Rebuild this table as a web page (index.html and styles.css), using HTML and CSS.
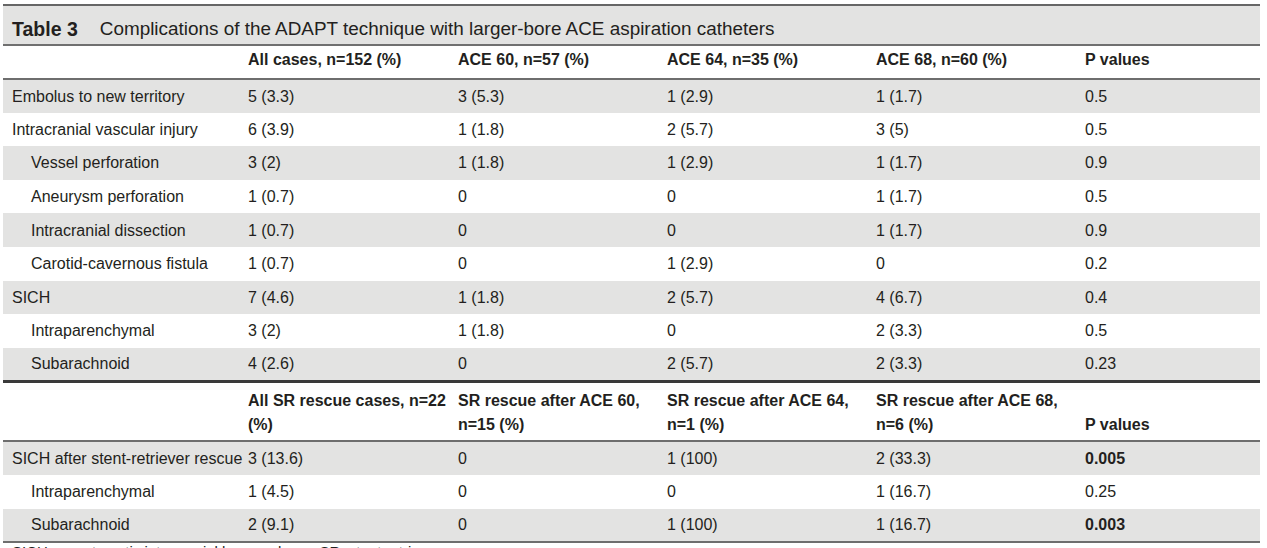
FILE: index.html
```html
<!DOCTYPE html>
<html>
<head>
<meta charset="utf-8">
<link rel="stylesheet" href="styles.css">
</head>
<body>
<div class="wrap">
  <div class="title"><span class="tnum">Table 3</span><span class="ttext">Complications of the ADAPT technique with larger-bore ACE aspiration catheters</span></div>
  <table class="tbl">
    <colgroup>
      <col class="c1"><col class="c2"><col class="c3"><col class="c4"><col class="c5"><col class="c6">
    </colgroup>
    <thead>
      <tr class="hdr">
        <th></th><th>All cases, n=152 (%)</th><th>ACE 60, n=57 (%)</th><th>ACE 64, n=35 (%)</th><th>ACE 68, n=60 (%)</th><th>P values</th>
      </tr>
    </thead>
    <tbody class="sec1">
      <tr class="g"><td>Embolus to new territory</td><td>5 (3.3)</td><td>3 (5.3)</td><td>1 (2.9)</td><td>1 (1.7)</td><td>0.5</td></tr>
      <tr><td>Intracranial vascular injury</td><td>6 (3.9)</td><td>1 (1.8)</td><td>2 (5.7)</td><td>3 (5)</td><td>0.5</td></tr>
      <tr class="g"><td class="ind">Vessel perforation</td><td>3 (2)</td><td>1 (1.8)</td><td>1 (2.9)</td><td>1 (1.7)</td><td>0.9</td></tr>
      <tr><td class="ind">Aneurysm perforation</td><td>1 (0.7)</td><td>0</td><td>0</td><td>1 (1.7)</td><td>0.5</td></tr>
      <tr class="g"><td class="ind">Intracranial dissection</td><td>1 (0.7)</td><td>0</td><td>0</td><td>1 (1.7)</td><td>0.9</td></tr>
      <tr><td class="ind">Carotid-cavernous fistula</td><td>1 (0.7)</td><td>0</td><td>1 (2.9)</td><td>0</td><td>0.2</td></tr>
      <tr class="g"><td>SICH</td><td>7 (4.6)</td><td>1 (1.8)</td><td>2 (5.7)</td><td>4 (6.7)</td><td>0.4</td></tr>
      <tr><td class="ind">Intraparenchymal</td><td>3 (2)</td><td>1 (1.8)</td><td>0</td><td>2 (3.3)</td><td>0.5</td></tr>
      <tr class="g"><td class="ind">Subarachnoid</td><td>4 (2.6)</td><td>0</td><td>2 (5.7)</td><td>2 (3.3)</td><td>0.23</td></tr>
    </tbody>
    <tbody class="sec2">
      <tr class="hdr2">
        <th></th><th>All SR rescue cases, n=22 (%)</th><th>SR rescue after ACE 60, n=15 (%)</th><th>SR rescue after ACE 64, n=1 (%)</th><th>SR rescue after ACE 68, n=6 (%)</th><th>P values</th>
      </tr>
      <tr class="g"><td>SICH after stent-retriever rescue</td><td>3 (13.6)</td><td>0</td><td>1 (100)</td><td>2 (33.3)</td><td class="b">0.005</td></tr>
      <tr><td class="ind">Intraparenchymal</td><td>1 (4.5)</td><td>0</td><td>0</td><td>1 (16.7)</td><td>0.25</td></tr>
      <tr class="g last"><td class="ind">Subarachnoid</td><td>2 (9.1)</td><td>0</td><td>1 (100)</td><td>1 (16.7)</td><td class="b">0.003</td></tr>
    </tbody>
  </table>
  <p class="foot">SICH, symptomatic intracranial haemorrhage; SR, stent retriever.</p>
</div>
</body>
</html>
```
FILE: styles.css
```css
html, body {
  margin: 0;
  padding: 0;
  background: #ffffff;
}
body {
  font-family: "Liberation Sans", Arial, sans-serif;
  color: #231f20;
  overflow: hidden;
}
.wrap {
  width: 1257px;
  margin: 4px 0 0 3px;
}
.title {
  border-top: 2px solid #666666;
  border-bottom: 2px solid #707070;
  background: #e3e3e2;
  height: 38px;
  box-sizing: content-box;
  display: flex;
  align-items: flex-end;
  padding: 0 0 0 9px;
  font-size: 18.9px;
  line-height: 30px;
  gap: 22px;
}
.tnum {
  font-weight: bold;
  font-size: 19.5px;
}
.tbl {
  width: 100%;
  border-collapse: collapse;
  table-layout: fixed;
  font-size: 16px;
}
.c1 { width: 236px; }
.c2 { width: 210px; }
.c3 { width: 209px; }
.c4 { width: 209px; }
.c5 { width: 209px; }
.c6 { width: 184px; }
.tbl th, .tbl td {
  text-align: left;
  padding: 0 0 0 9px;
  white-space: nowrap;
  line-height: 23px;
  vertical-align: middle;
}
.tbl th {
  font-weight: bold;
}
.hdr {
  height: 33px;
  border-bottom: 2px solid #6e6e6e;
}
.hdr th {
  padding-bottom: 5px;
}
.tbl tbody tr {
  height: 33.6px;
}
.g {
  background: #e3e3e2;
}
.tbl td.ind {
  padding-left: 28px;
}
.tbl td.b {
  font-weight: bold;
}
.sec2 {
  border-top: 3px solid #3a3a3a;
}
.tbl tr.hdr2 {
  height: 60px;
  border-bottom: 2px solid #6e6e6e;
}
.hdr2 th {
  white-space: normal;
  vertical-align: bottom;
  padding-bottom: 3px;
  padding-right: 0;
  line-height: 24px;
}
.last {
  border-bottom: 2px solid #6e6e6e;
}
.foot {
  margin: 0 0 0 9px;
  font-size: 15px;
  line-height: 18px;
}
```
